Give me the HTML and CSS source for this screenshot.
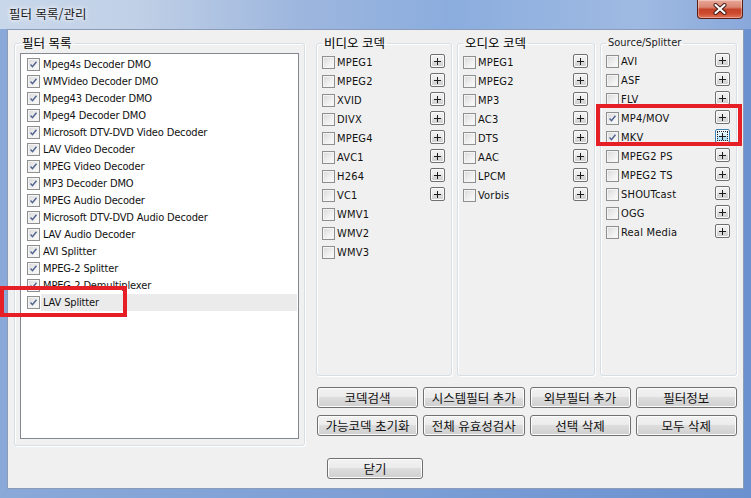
FILE: index.html
```html
<!DOCTYPE html>
<html lang="ko">
<head>
    <meta charset="UTF-8">
    <title>필터 목록/관리</title>
    <link rel="stylesheet" href="styles.css">
</head>
<body>
    <div class="window">
        <div class="titlebar">
            <span class="title">필터 목록/관리</span>
            <button class="close-x">
                <svg width="18" height="12" viewBox="0 0 18 12">
                    <path d="M4.5 2 L13.5 10 M13.5 2 L4.5 10" stroke="#3a1410" stroke-width="4" stroke-linecap="round"/>
                    <path d="M4.5 2 L13.5 10 M13.5 2 L4.5 10" stroke="#fff" stroke-width="2.2" stroke-linecap="round"/>
                </svg>
            </button>
        </div>

        <div class="client">
            <fieldset class="group filters">
                <legend>필터 목록</legend>
                <ul class="listbox">
                    <li><span class="check on"><svg viewBox="0 0 13 13"><path d="M3 6.5 L5.3 9 L10 3.3"/></svg></span><span class="name">Mpeg4s Decoder DMO</span></li>
                    <li><span class="check on"><svg viewBox="0 0 13 13"><path d="M3 6.5 L5.3 9 L10 3.3"/></svg></span><span class="name">WMVideo Decoder DMO</span></li>
                    <li><span class="check on"><svg viewBox="0 0 13 13"><path d="M3 6.5 L5.3 9 L10 3.3"/></svg></span><span class="name">Mpeg43 Decoder DMO</span></li>
                    <li><span class="check on"><svg viewBox="0 0 13 13"><path d="M3 6.5 L5.3 9 L10 3.3"/></svg></span><span class="name">Mpeg4 Decoder DMO</span></li>
                    <li><span class="check on"><svg viewBox="0 0 13 13"><path d="M3 6.5 L5.3 9 L10 3.3"/></svg></span><span class="name">Microsoft DTV-DVD Video Decoder</span></li>
                    <li><span class="check on"><svg viewBox="0 0 13 13"><path d="M3 6.5 L5.3 9 L10 3.3"/></svg></span><span class="name">LAV Video Decoder</span></li>
                    <li><span class="check on"><svg viewBox="0 0 13 13"><path d="M3 6.5 L5.3 9 L10 3.3"/></svg></span><span class="name">MPEG Video Decoder</span></li>
                    <li><span class="check on"><svg viewBox="0 0 13 13"><path d="M3 6.5 L5.3 9 L10 3.3"/></svg></span><span class="name">MP3 Decoder DMO</span></li>
                    <li><span class="check on"><svg viewBox="0 0 13 13"><path d="M3 6.5 L5.3 9 L10 3.3"/></svg></span><span class="name">MPEG Audio Decoder</span></li>
                    <li><span class="check on"><svg viewBox="0 0 13 13"><path d="M3 6.5 L5.3 9 L10 3.3"/></svg></span><span class="name">Microsoft DTV-DVD Audio Decoder</span></li>
                    <li><span class="check on"><svg viewBox="0 0 13 13"><path d="M3 6.5 L5.3 9 L10 3.3"/></svg></span><span class="name">LAV Audio Decoder</span></li>
                    <li><span class="check on"><svg viewBox="0 0 13 13"><path d="M3 6.5 L5.3 9 L10 3.3"/></svg></span><span class="name">AVI Splitter</span></li>
                    <li><span class="check on"><svg viewBox="0 0 13 13"><path d="M3 6.5 L5.3 9 L10 3.3"/></svg></span><span class="name">MPEG-2 Splitter</span></li>
                    <li><span class="check on"><svg viewBox="0 0 13 13"><path d="M3 6.5 L5.3 9 L10 3.3"/></svg></span><span class="name">MPEG-2 Demultiplexer</span></li>
                    <li class="selected"><span class="check on"><svg viewBox="0 0 13 13"><path d="M3 6.5 L5.3 9 L10 3.3"/></svg></span><span class="name">LAV Splitter</span></li>
                </ul>
            </fieldset>

            <div class="side">
                <div class="codecs">
                    <fieldset class="group">
                        <legend>비디오 코덱</legend>
                        <div class="opt"><span class="check"></span><span class="label">MPEG1</span><button class="plus"></button></div>
                        <div class="opt"><span class="check"></span><span class="label">MPEG2</span><button class="plus"></button></div>
                        <div class="opt"><span class="check"></span><span class="label">XVID</span><button class="plus"></button></div>
                        <div class="opt"><span class="check"></span><span class="label">DIVX</span><button class="plus"></button></div>
                        <div class="opt"><span class="check"></span><span class="label">MPEG4</span><button class="plus"></button></div>
                        <div class="opt"><span class="check"></span><span class="label">AVC1</span><button class="plus"></button></div>
                        <div class="opt"><span class="check"></span><span class="label">H264</span><button class="plus"></button></div>
                        <div class="opt"><span class="check"></span><span class="label">VC1</span><button class="plus"></button></div>
                        <div class="opt"><span class="check"></span><span class="label">WMV1</span></div>
                        <div class="opt"><span class="check"></span><span class="label">WMV2</span></div>
                        <div class="opt"><span class="check"></span><span class="label">WMV3</span></div>
                    </fieldset>
                    <fieldset class="group">
                        <legend>오디오 코덱</legend>
                        <div class="opt"><span class="check"></span><span class="label">MPEG1</span><button class="plus"></button></div>
                        <div class="opt"><span class="check"></span><span class="label">MPEG2</span><button class="plus"></button></div>
                        <div class="opt"><span class="check"></span><span class="label">MP3</span><button class="plus"></button></div>
                        <div class="opt"><span class="check"></span><span class="label">AC3</span><button class="plus"></button></div>
                        <div class="opt"><span class="check"></span><span class="label">DTS</span><button class="plus"></button></div>
                        <div class="opt"><span class="check"></span><span class="label">AAC</span><button class="plus"></button></div>
                        <div class="opt"><span class="check"></span><span class="label">LPCM</span><button class="plus"></button></div>
                        <div class="opt"><span class="check"></span><span class="label">Vorbis</span><button class="plus"></button></div>
                    </fieldset>
                    <fieldset class="group source">
                        <legend>Source/Splitter</legend>
                        <div class="opt"><span class="check"></span><span class="label">AVI</span><button class="plus"></button></div>
                        <div class="opt"><span class="check"></span><span class="label">ASF</span><button class="plus"></button></div>
                        <div class="opt"><span class="check"></span><span class="label">FLV</span><button class="plus"></button></div>
                        <div class="opt"><span class="check on"><svg viewBox="0 0 13 13"><path d="M3 6.5 L5.3 9 L10 3.3"/></svg></span><span class="label">MP4/MOV</span><button class="plus"></button></div>
                        <div class="opt"><span class="check on"><svg viewBox="0 0 13 13"><path d="M3 6.5 L5.3 9 L10 3.3"/></svg></span><span class="label">MKV</span><button class="plus focused"></button></div>
                        <div class="opt"><span class="check"></span><span class="label">MPEG2 PS</span><button class="plus"></button></div>
                        <div class="opt"><span class="check"></span><span class="label">MPEG2 TS</span><button class="plus"></button></div>
                        <div class="opt"><span class="check"></span><span class="label">SHOUTcast</span><button class="plus"></button></div>
                        <div class="opt"><span class="check"></span><span class="label">OGG</span><button class="plus"></button></div>
                        <div class="opt"><span class="check"></span><span class="label">Real Media</span><button class="plus"></button></div>
                    </fieldset>
                </div>

                <div class="actions">
                    <button class="btn">코덱검색</button>
                    <button class="btn">시스템필터 추가</button>
                    <button class="btn">외부필터 추가</button>
                    <button class="btn">필터정보</button>
                    <button class="btn">가능코덱 초기화</button>
                    <button class="btn">전체 유효성검사</button>
                    <button class="btn">선택 삭제</button>
                    <button class="btn">모두 삭제</button>
                </div>

                <button class="btn close-btn">닫기</button>
            </div>
        </div>

        <div class="mark mark-list"></div>
        <div class="mark mark-source"></div>
    </div>
</body>
</html>
```

FILE: styles.css
```css
* {
    margin: 0;
    padding: 0;
    box-sizing: border-box;
}

body {
    width: 751px;
    height: 498px;
    overflow: hidden;
    font-family: "DejaVu Sans Condensed", "Liberation Sans", sans-serif;
    font-size: 11px;
    color: #111;
}

.window {
    position: relative;
    width: 751px;
    height: 498px;
    padding: 0 7px 9px 7px;
    background: linear-gradient(90deg, #8aa9d9 0%, #7d9fd6 50%, #6b91cf 100%);
}

.titlebar {
    height: 29px;
    margin: 0 -7px;
    padding: 0 8px 0 9px;
    display: flex;
    align-items: flex-start;
    justify-content: space-between;
    background: linear-gradient(90deg, #c9d7ea 0%, #c0d0e6 18%, #9db6de 40%, #8badde 60%, #9fbae2 85%, #89a8da 100%);
}

.title {
    margin-top: 7px;
    font-family: "Noto Sans CJK KR", sans-serif;
    font-size: 12.5px;
    line-height: 14px;
    color: #1a1a1a;
    text-shadow: 0 0 6px #fff, 0 0 4px #fff;
}

.close-x {
    width: 46px;
    height: 19px;
    display: flex;
    align-items: center;
    justify-content: center;
    border: 1px solid #5b1d14;
    border-top: none;
    border-radius: 0 0 4px 4px;
    background: linear-gradient(#e9a797 0%, #d88671 40%, #c4432a 52%, #cd4a2f 75%, #e07659 100%);
    box-shadow: inset 0 0 0 1px rgba(255, 255, 255, 0.35);
}

.client {
    height: 460px;
    display: grid;
    grid-template-columns: 291px 421px;
    column-gap: 11px;
    padding: 6px 6px 0 6px;
    border: 1px solid #8a9cb8;
    background: #f0f0f0;
}

.group {
    border: 1px solid #d5dfe5;
    border-radius: 3px;
    padding: 0 5px 6px 5px;
    min-width: 0;
    box-shadow: inset 1px 1px 0 #fff, 1px 1px 0 #fff;
}

.group legend {
    padding: 0 2px;
    font-family: "Noto Sans CJK KR", sans-serif;
    font-size: 12.5px;
    line-height: 14px;
    color: #000;
}

.group.source legend {
    font-family: "DejaVu Sans Condensed", "Liberation Sans", sans-serif;
    font-size: 11px;
    color: #222;
}

.filters {
    height: 410px;
}

.listbox {
    list-style: none;
    height: 386px;
    margin-top: 3px;
    padding-top: 2px;
    border: 1px solid #828790;
    background: #fff;
}

.listbox li {
    height: 17px;
    display: flex;
    align-items: center;
    padding-left: 6px;
    padding-right: 1px;
}

.listbox .name {
    flex: 1;
    height: 17px;
    line-height: 17px;
    margin-left: 1px;
    padding-left: 2px;
    white-space: nowrap;
    letter-spacing: -0.15px;
}

.listbox .selected .name {
    background: #ebebeb;
}

.check {
    flex: none;
    width: 13px;
    height: 13px;
    border: 1px solid #8e8f8f;
    background: linear-gradient(135deg, #d8d8d8 0%, #f1f1f1 60%, #fbfbfb 100%);
    box-shadow: inset 0 0 0 1px #f4f4f4;
}

.check svg {
    display: block;
    width: 11px;
    height: 11px;
}

.check svg path {
    fill: none;
    stroke: #4f6290;
    stroke-width: 1.7;
}

.side {
    display: flex;
    flex-direction: column;
}

.codecs {
    height: 340px;
    display: grid;
    grid-template-columns: 136px 138px 137px;
    column-gap: 5px;
}

.codecs .group {
    padding: 0 6px 0 5px;
}

.opt {
    height: 19px;
    display: flex;
    align-items: center;
}

.opt:first-of-type {
    margin-top: 3px;
}

.source .opt:first-of-type {
    margin-top: 2px;
}

.opt .label {
    margin-left: 2px;
    white-space: nowrap;
    letter-spacing: 0.2px;
}

.plus {
    position: relative;
    width: 15px;
    height: 14px;
    margin-left: auto;
    margin-top: -3px;
    border: 1px solid #707070;
    border-radius: 2px;
    background: linear-gradient(#f2f2f2 0%, #ebebeb 50%, #dddddd 50%, #cfcfcf 100%);
    box-shadow: inset 0 0 0 1px #fbfbfb;
}

.plus::before,
.plus::after {
    content: "";
    position: absolute;
    background: #1c1c1c;
}

.plus::before {
    left: 3px;
    top: 5.5px;
    width: 7px;
    height: 1.4px;
}

.plus::after {
    left: 5.8px;
    top: 2.7px;
    width: 1.4px;
    height: 7px;
}

.plus.focused {
    border-color: #3c7fb1;
    background: linear-gradient(#eaf6fd 0%, #d9f0fc 50%, #bee6fd 50%, #a7d9f5 100%);
    outline: 1px dotted #222;
    outline-offset: -3px;
}

.actions {
    margin-top: 11px;
    padding-left: 1px;
    display: grid;
    grid-template-columns: repeat(4, 1fr);
    grid-auto-rows: 21px;
    gap: 7px 5px;
}

.btn {
    height: 21px;
    border: 1px solid #707070;
    border-radius: 3px;
    background: linear-gradient(#f2f2f2 0%, #ebebeb 50%, #dddddd 50%, #cfcfcf 100%);
    box-shadow: inset 0 0 0 1px #fcfcfc;
    font-family: "Noto Sans CJK KR", sans-serif;
    font-size: 12.5px;
    line-height: 17px;
    color: #111;
    white-space: nowrap;
}

.close-btn {
    width: 96px;
    margin-top: 22px;
    margin-left: 11px;
}

.mark {
    position: absolute;
    border: 4px solid #e61e26;
}

.mark-list {
    left: 0;
    top: 286px;
    width: 127px;
    height: 31px;
}

.mark-source {
    left: 596px;
    top: 104px;
    width: 146px;
    height: 42px;
}
```
